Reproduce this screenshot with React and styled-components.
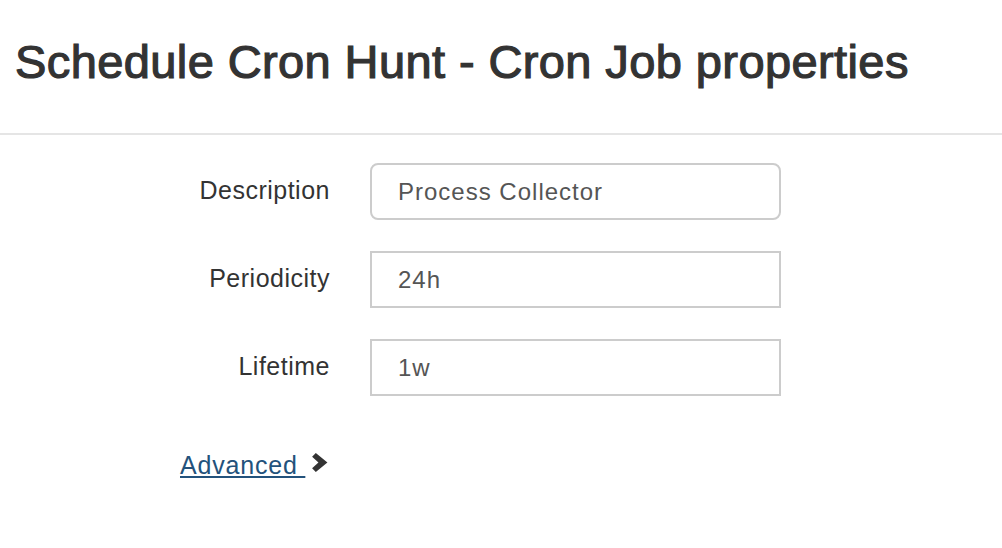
import React from "react";
import styled, { createGlobalStyle } from "styled-components";

const GlobalStyle = createGlobalStyle`
  html, body {
    margin: 0;
    padding: 0;
    background: #fff;
  }
  body {
    font-family: "Liberation Sans", Arial, sans-serif;
    color: #333;
  }
`;

const fields = [
  { id: "description", label: "Description", value: "Process Collector", rounded: true },
  { id: "periodicity", label: "Periodicity", value: "24h" },
  { id: "lifetime", label: "Lifetime", value: "1w" },
];

const App = () => (
  <>
    <GlobalStyle />
    <Page>
      <Header>
        <Title>Schedule Cron Hunt - Cron Job properties</Title>
      </Header>
      <Form>
        {fields.map(field => (
          <Row key={field.id}>
            <Label htmlFor={field.id}>{field.label}</Label>
            <Input id={field.id} defaultValue={field.value} $rounded={field.rounded} />
          </Row>
        ))}
        <AdvancedRow>
          <AdvancedLink href="#">Advanced </AdvancedLink>
          <Chevron viewBox="0 0 16 18">
            <path d="M1 3.5 L4.5 0 L15.5 9 L4.5 18 L1 14.5 L7 9 Z" fill="#333" />
          </Chevron>
        </AdvancedRow>
      </Form>
    </Page>
  </>
);

export default App;

const Page = styled.div`
  width: 1002px;
  height: 548px;
  overflow: hidden;
`;

const Header = styled.div`
  height: 135px;
  border-bottom: 2px solid #e5e5e5;
  box-sizing: border-box;
  padding: 34px 15px 0;
`;

const Title = styled.h4`
  margin: 0;
  font-size: 47px;
  line-height: 56px;
  font-weight: normal;
  -webkit-text-stroke: 1.2px #333;
  color: #333;
  letter-spacing: 0.4px;
  white-space: nowrap;
`;

const Form = styled.div`
  padding-top: 28px;
  display: flex;
  flex-direction: column;
  gap: 31px;
`;

const Row = styled.div`
  display: flex;
  align-items: flex-start;
`;

const Label = styled.label`
  width: 330px;
  text-align: right;
  font-size: 25px;
  letter-spacing: 0.5px;
  line-height: 32px;
  padding-top: 11px;
  color: #333;
`;

const Input = styled.input`
  margin-left: 40px;
  width: 411px;
  height: 57px;
  box-sizing: border-box;
  border: 2px solid #ccc;
  border-radius: ${p => (p.$rounded ? "8px" : "0")};
  padding: 0 26px;
  font-family: "Liberation Sans", Arial, sans-serif;
  font-size: 24px;
  letter-spacing: 1px;
  color: #555;
  outline: none;
  background: #fff;
`;

const AdvancedRow = styled.div`
  display: flex;
  align-items: center;
  gap: 6px;
  padding-left: 180px;
  margin-top: 22px;
`;

const AdvancedLink = styled.a`
  font-size: 25px;
  letter-spacing: 0.8px;
  line-height: 32px;
  color: #23527c;
  text-decoration: underline;
  white-space: pre;
`;

const Chevron = styled.svg`
  width: 17px;
  height: 19px;
  flex-shrink: 0;
  margin-bottom: 6px;
`;
